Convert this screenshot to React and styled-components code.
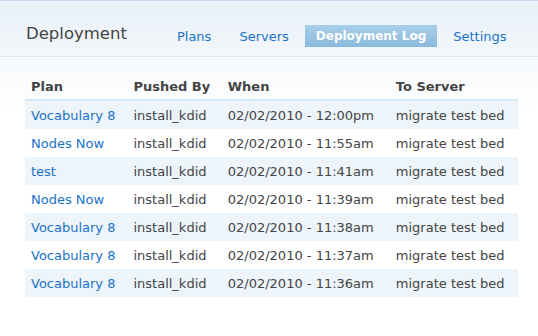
import React from "react";
import styled, { createGlobalStyle } from "styled-components";

const Global = createGlobalStyle`
  body {
    margin: 0;
    background: #fff;
    font-family: "DejaVu Sans", Verdana, sans-serif;
  }
`;

const rows = [
  ["Vocabulary 8", "install_kdid", "02/02/2010 - 12:00pm", "migrate test bed"],
  ["Nodes Now", "install_kdid", "02/02/2010 - 11:55am", "migrate test bed"],
  ["test", "install_kdid", "02/02/2010 - 11:41am", "migrate test bed"],
  ["Nodes Now", "install_kdid", "02/02/2010 - 11:39am", "migrate test bed"],
  ["Vocabulary 8", "install_kdid", "02/02/2010 - 11:38am", "migrate test bed"],
  ["Vocabulary 8", "install_kdid", "02/02/2010 - 11:37am", "migrate test bed"],
  ["Vocabulary 8", "install_kdid", "02/02/2010 - 11:36am", "migrate test bed"],
];

const tabs = ["Plans", "Servers", "Deployment Log", "Settings"];

const App = () => {
  return (
    <Page>
      <Global />
      <Header>
        <Title>Deployment</Title>
        <Nav>
          {tabs.map((t) => (
            <Tab key={t} $active={t === "Deployment Log"}>
              {t}
            </Tab>
          ))}
        </Nav>
      </Header>
      <Content>
        <Table>
          <thead>
            <tr>
              <Th>Plan</Th>
              <Th>Pushed By</Th>
              <Th>When</Th>
              <Th>To Server</Th>
            </tr>
          </thead>
          <tbody>
            {rows.map((r, i) => (
              <Row key={i} $striped={i % 2 === 0}>
                <Td>
                  <PlanLink>{r[0]}</PlanLink>
                </Td>
                <Td>{r[1]}</Td>
                <Td>{r[2]}</Td>
                <Td>{r[3]}</Td>
              </Row>
            ))}
          </tbody>
        </Table>
      </Content>
    </Page>
  );
};

const Page = styled.div`
  width: 538px;
  height: 336px;
  background: linear-gradient(#f6f9fc 58px, #ffffff 110px);
`;

const Header = styled.div`
  display: flex;
  align-items: flex-end;
  height: 57px;
  box-sizing: border-box;
  border-top: 1px solid #c7dcf0;
  border-bottom: 1px solid #dfe6ee;
  background: linear-gradient(#e8f0f8, #f3f7fb);
  padding: 0 0 9px 26px;
`;

const Title = styled.h1`
  margin: 0 0 3px 0;
  font-size: 16.5px;
  line-height: 20px;
  font-weight: normal;
  color: #444;
`;

const Nav = styled.div`
  display: flex;
  align-items: center;
  margin-left: 38px;
  gap: 4px;
`;

const Tab = styled.div`
  font-size: ${(p) => (p.$active ? "12px" : "13px")};
  padding: 0 ${(p) => (p.$active ? "11px" : "12px")};
  height: 22px;
  display: flex;
  align-items: center;
  color: ${(p) => (p.$active ? "#fff" : "#1a72c9")};
  font-weight: ${(p) => (p.$active ? "bold" : "normal")};
  background: ${(p) =>
    p.$active ? "linear-gradient(#a9cfe9, #8ab9dd)" : "transparent"};
`;

const Content = styled.div`
  padding: 16px 20px 0 25px;
`;

const Table = styled.table`
  width: 100%;
  border-collapse: collapse;
  font-size: 13px;
  color: #444;
`;

const Th = styled.th`
  text-align: left;
  font-weight: bold;
  height: 26px;
  padding: 0 6px;
  border-bottom: 2px solid #d6e7f4;
`;

const Row = styled.tr`
  background: ${(p) => (p.$striped ? "#edf4fa" : "#fff")};
`;

const Td = styled.td`
  height: 28px;
  padding: 0 6px;
  white-space: nowrap;
`;

const PlanLink = styled.span`
  color: #1a72c9;
`;

export default App;
